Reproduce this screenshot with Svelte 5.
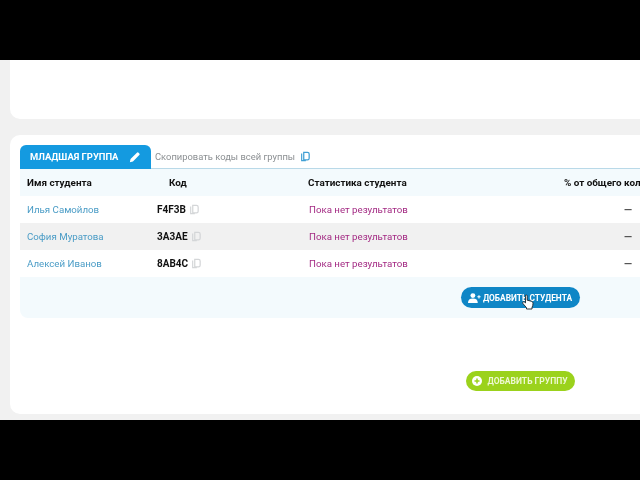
<script>
  const students = [
    { name: "Илья Самойлов", code: "F4F3B" },
    { name: "София Муратова", code: "3A3AE" },
    { name: "Алексей Иванов", code: "8AB4C" },
  ];
</script>

{#snippet copyIcon(cls)}
  <svg class={cls} viewBox="0 0 12 12" width="10" height="11">
    <path d="M4.500 1h4.500a2 2 0 0 1 2 2v5a2 2 0 0 1-2 2h-4.500z" fill="none" stroke="currentColor" stroke-width="1.500" />
    <path d="M2 2.500v8.500h5" fill="none" stroke="currentColor" stroke-width="1.400" />
  </svg>
{/snippet}

<div class="screen">
  <div class="bar"></div>
  <div class="page">
    <div class="inner">
      <section class="card top-card"></section>

      <section class="card group-card">
        <div class="tabs">
          <div class="tab">
            <span>МЛАДШАЯ ГРУППА</span>
            <svg viewBox="0 0 14 14" width="12" height="12">
              <path d="M1 13l.8-3.600 7.400-7.400a1.400 1.400 0 0 1 2 0l.8.800a1.400 1.400 0 0 1 0 2l-7.400 7.400z" fill="#fff" />
            </svg>
          </div>
          <div class="copy-all">
            Скопировать коды всей группы
            {@render copyIcon("copy-blue")}
          </div>
        </div>

        <div class="row head">
          <div class="name">Имя студента</div>
          <div class="code-head">Код</div>
          <div>Статистика студента</div>
          <div>% от общего количества</div>
        </div>

        {#each students as s}
          <div class="row student">
            <div class="name link">{s.name}</div>
            <div class="code">
              <span>{s.code}</span>
              {@render copyIcon("copy-grey")}
            </div>
            <div class="stat">Пока нет результатов</div>
            <div class="dash">—</div>
          </div>
        {/each}

        <div class="table-foot">
          <button class="btn blue">
            <svg viewBox="0 0 16 12" width="13" height="10">
              <circle cx="6" cy="3" r="3" fill="#fff" />
              <path d="M0 12c0-4 2-5.500 6-5.500s6 1.500 6 5.500z" fill="#fff" />
              <path d="M13.500 2.500v4M11.500 4.500h4" stroke="#fff" stroke-width="1.400" />
            </svg>
            ДОБАВИТЬ СТУДЕНТА
          </button>
          <svg class="cursor" viewBox="0 0 12 16" width="12" height="16">
            <path d="M3.500 1.200c.8-.6 1.700 0 1.700 1v4l4 1c1.200.3 1.800 1 1.800 2.200 0 1.500-.4 3-1 4.100v1.500h-5.500v-1.300l-3.600-4.200c-.8-1 .4-2.300 1.500-1.500l1.100.9v-6.500c0-.2 0-.4 0-.4z" fill="#fff" stroke="#222" stroke-width="0.900" />
          </svg>
        </div>

        <div class="group-actions">
          <button class="btn green">
            <svg viewBox="0 0 12 12" width="10" height="10">
              <circle cx="6" cy="6" r="6" fill="#fff" />
              <path d="M6 3v6M3 6h6" stroke="#9bd21c" stroke-width="1.800" />
            </svg>
            ДОБАВИТЬ ГРУППУ
          </button>
        </div>
      </section>
    </div>
  </div>
  <div class="bar"></div>
</div>

<style>
  :global(body) {
    margin: 0;
    background: #000;
  }

  .screen {
    width: 640px;
    height: 480px;
    overflow: hidden;
    display: flex;
    flex-direction: column;
    font-family: Roboto, "Noto Sans", sans-serif;
    filter: blur(0.3px);
  }

  .bar {
    height: 60px;
    flex: none;
    background: #000;
  }

  .page {
    height: 360px;
    overflow: hidden;
    background: #f1f1f1;
  }

  .inner {
    width: 1020px;
    margin-left: 10px;
    display: flex;
    flex-direction: column;
    gap: 16px;
  }

  .card {
    background: #fff;
    border-radius: 10px;
  }

  .top-card {
    height: 59px;
    border-top-left-radius: 0;
    border-top-right-radius: 0;
  }

  .group-card {
    height: 279px;
    padding: 10px 10px 0;
    box-sizing: border-box;
  }

  .tabs {
    display: flex;
    align-items: center;
    height: 24px;
    border-bottom: 1px solid #b9d9e8;
    box-sizing: border-box;
  }

  .tab {
    width: 131px;
    height: 24px;
    box-sizing: border-box;
    padding: 0 10px;
    display: flex;
    align-items: center;
    justify-content: space-between;
    background: #149ae0;
    color: #fff;
    font-size: 9.400px;
    font-weight: 700;
    border-radius: 6px 6px 0 0;
  }

  .copy-all {
    margin-left: 4px;
    display: flex;
    align-items: center;
    gap: 5px;
    font-size: 9.400px;
    color: #8b8f92;
  }

  .copy-blue {
    color: #3f9fd4;
  }

  .copy-grey {
    color: #d4d6d8;
    margin-left: 3px;
  }

  .row {
    display: grid;
    grid-template-columns: 137px 151px 256px 1fr;
    align-items: center;
    height: 27px;
    font-size: 9.700px;
  }

  .head {
    background: #f3fafd;
    color: #111;
    font-size: 9.900px;
    font-weight: 700;
    white-space: nowrap;
  }

  .name {
    padding-left: 7px;
  }

  .code-head {
    padding-left: 12px;
  }

  .student:nth-of-type(even) {
    background: #f1f1f1;
  }

  .link {
    color: #4a9cc6;
  }

  .code {
    display: flex;
    align-items: center;
    font-size: 10px;
    font-weight: 700;
    color: #111;
  }

  .stat {
    color: #a32a83;
    padding-left: 1px;
  }

  .dash {
    padding-left: 60px;
    font-size: 10.500px;
    font-weight: 700;
    color: #555;
  }

  .table-foot {
    position: relative;
    height: 41px;
    background: #f3fafd;
    border-radius: 0 0 8px 8px;
    display: flex;
    justify-content: center;
    align-items: flex-start;
    padding-top: 10px;
    box-sizing: border-box;
  }

  .btn {
    border: none;
    display: flex;
    align-items: center;
    justify-content: center;
    color: #fff;
    font-family: inherit;
    font-weight: 700;
    border-radius: 11px;
    padding: 0;
  }

  .blue {
    width: 119px;
    height: 21px;
    gap: 2px;
    font-size: 8.400px;
    background: #0f86c6;
  }

  .green {
    width: 109px;
    height: 20px;
    gap: 5px;
    font-size: 8.500px;
    background: #9bd21c;
    color: #eef8d2;
  }

  .cursor {
    position: absolute;
    left: 502px;
    top: 17px;
  }

  .group-actions {
    display: flex;
    justify-content: center;
    padding-top: 53px;
  }
</style>
